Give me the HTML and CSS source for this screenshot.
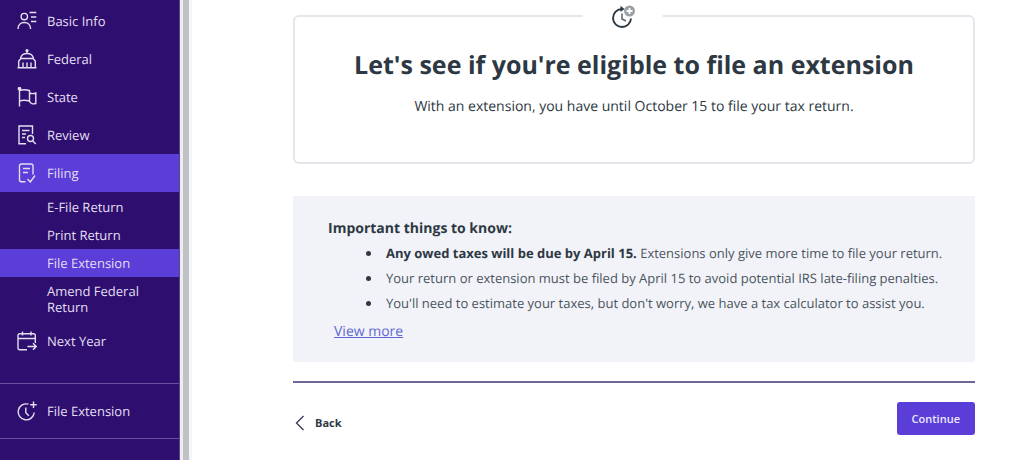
FILE: index.html
```html
<!DOCTYPE html>
<html lang="en">
<head>
    <meta charset="UTF-8">
    <meta name="viewport" content="width=device-width, initial-scale=1.0">
    <title>File Extension</title>
    <link rel="stylesheet" href="styles.css">
</head>
<body>

    <div class="page">

        <!-- Sidebar -->
        <nav class="sidebar">
            <a href="#" class="nav-item">
                <svg class="icon" viewBox="0 0 20 20"><circle cx="7.3" cy="5.6" r="3.2"/><path d="M1 18c0-4 2.500-6.500 6.300-6.500s6.300 2.500 6.300 6.500M12.500 1.500h6.800M14 6h5.300M14 10.500h5.300"/></svg>
                Basic Info
            </a>
            <a href="#" class="nav-item">
                <svg class="icon" viewBox="0 0 20 20"><path d="M10 1v3M3.500 9.500C4 6.500 6.500 4.500 10 4.500s6 2 6.500 5M.5 18.800h19M1.700 18.500v-6.500l2.300-2.500h12l2.300 2.500v6.500M6 18v-4.500M10 18v-4.500M14 18v-4.500"/><circle cx="10" cy="1.700" r="0.900"/></svg>
                Federal
            </a>
            <a href="#" class="nav-item">
                <svg class="icon" viewBox="0 0 20 20"><path d="M2.500 1v18.500M2.500 3.500c3-1 6-1 10 0v10.500c-4-1-7-1-10 0M12.500 6c2 .8 4 .8 6.300 0v10.500c-2.800.8-5.500.5-6.300-2.500"/><circle cx="2.500" cy="1.700" r="1.200" fill="#e4dff0"/></svg>
                State
            </a>
            <a href="#" class="nav-item">
                <svg class="icon" viewBox="0 0 20 20"><path d="M9 18.800H2V1h13.500v8M5 5.500h7.500M5 9h4M5 12.500h3M15.800 16l3 3"/><circle cx="13.500" cy="13.500" r="3"/></svg>
                Review
            </a>
            <a href="#" class="nav-item active">
                <svg class="icon" viewBox="0 0 20 20"><path d="M8.500 18.800H4.500c-1.200 0-2-.8-2-2V3c0-1.200.8-2 2-2H14c1.200 0 2 .8 2 2v8.500M6 5.500h7M6 9.500h5M10.500 16l2.800 3 4.700-6.500"/></svg>
                Filing
            </a>

            <div class="sub-menu">
                <a href="#" class="sub-item">E-File Return</a>
                <a href="#" class="sub-item">Print Return</a>
                <a href="#" class="sub-item active">File Extension</a>
                <a href="#" class="sub-item">Amend Federal Return</a>
            </div>

            <a href="#" class="nav-item">
                <svg class="icon" viewBox="0 0 20 20"><path d="M10 18.800H2.800c-1.200 0-1.800-.7-1.800-1.800V4.500c0-1.200.6-1.800 1.800-1.800h13.700c1.200 0 1.800.6 1.800 1.800V12M1 7.500h17.300M5.500.5v4M14 .5v4M10.500 15.500h8.500M16 12.200l3.200 3.300L16 18.800"/></svg>
                Next Year
            </a>

            <div class="shortcut">
                <a href="#" class="nav-item">
                    <svg class="icon" viewBox="0 0 20 20"><path d="M11.500 3.200a8 8 0 1 0 5.700 8.300M8.800 6.500v5.200l3 3M16.500.5v6.500M13.200 3.700h6.500"/></svg>
                    File Extension
                </a>
            </div>
        </nav>

        <div class="divider-bar"></div>

        <!-- Main Content -->
        <main class="content">
            <section class="card">
                <div class="card-icon">
                    <svg viewBox="0 0 24 24"><path d="M10.500 4A9 9 0 1 0 20 13.500" stroke="#2d3843" stroke-width="1.900" fill="none"/><path d="M9.500.8l4 3.200-4 3z" fill="#2d3843"/><path d="M11 8.500v5.500l4 2" stroke="#5a636c" stroke-width="1.500" fill="none"/><circle cx="18.500" cy="6" r="5.500" fill="#9a9fa4"/><path d="M18.500 3v6M15.500 6h6" stroke="#ffffff" stroke-width="1.800"/></svg>
                </div>
                <h1>Let's see if you're eligible to file an extension</h1>
                <p>With an extension, you have until October 15 to file your tax return.</p>
            </section>

            <section class="info-box">
                <h2>Important things to know:</h2>
                <ul>
                    <li><strong>Any owed taxes will be due by April 15.</strong> Extensions only give more time to file your return.</li>
                    <li>Your return or extension must be filed by April 15 to avoid potential IRS late-filing penalties.</li>
                    <li>You'll need to estimate your taxes, but don't worry, we have a tax calculator to assist you.</li>
                </ul>
                <a href="#" class="view-more">View more</a>
            </section>

            <div class="actions">
                <button type="button" class="back-btn">
                    <svg viewBox="0 0 10 16"><path d="M8.500 1L1.500 8l7 7"/></svg>
                    Back
                </button>
                <button type="button" class="continue-btn">Continue</button>
            </div>
        </main>

    </div>

</body>
</html>
```
FILE: styles.css
```css
* {
    box-sizing: border-box;
}
body {
    margin: 0;
    font-family: "Open Sans", "Noto Sans", sans-serif;
    text-rendering: geometricPrecision;
    color: #2d3843;
    background-color: #fff;
}
.page {
    display: flex;
    min-height: 100vh;
}

/* Sidebar */
.sidebar {
    flex: 0 0 180px;
    padding-top: 2px;
    background-color: #2e0f70;
    border-right: 1px solid #58448a;
}
.nav-item {
    display: flex;
    align-items: center;
    gap: 10px;
    height: 38px;
    padding-left: 17px;
    color: #e4dff0;
    font-size: 13px;
    text-decoration: none;
}
.icon {
    width: 20px;
    height: 20px;
    fill: none;
    stroke: #e4dff0;
    stroke-width: 1.4;
}
.active {
    background-color: #5b3dd8;
}
.sub-menu {
    padding: 1px 0;
}
.sub-item {
    display: block;
    padding: 6px 32px 6px 47px;
    color: #e4dff0;
    font-size: 13px;
    line-height: 16px;
    text-decoration: none;
}
.shortcut {
    margin-top: 23px;
    padding: 8px 0;
    border-top: 1px solid #6a4f9c;
    border-bottom: 1px solid #6a4f9c;
}
.divider-bar {
    flex: 0 0 12px;
    background-color: #bfc1c4;
    border-left: 3px solid #eeeef2;
    border-right: 3px solid #f4f5f8;
}

/* Main content */
.content {
    flex: 1;
    padding: 15px 49px 24px 101px;
}
.card {
    position: relative;
    padding: 28px 32px 43px;
    border: 2px solid #e5e5ec;
    border-radius: 6px;
    text-align: center;
}
.card-icon {
    position: absolute;
    top: -12px;
    left: calc(50% - 51px);
    display: flex;
    justify-content: center;
    width: 80px;
    background-color: #fff;
}
.card-icon svg {
    width: 24px;
    height: 24px;
}
h1 {
    margin: 0;
    font-size: 25px;
    line-height: 40px;
}
.card p {
    margin: 10px 0 0;
    font-size: 14px;
    line-height: 24px;
}
.info-box {
    margin-top: 32px;
    padding: 21px 35px 17px;
    background-color: #f2f3f8;
    border-radius: 2px;
}
h2 {
    margin: 0 0 1px;
    font-size: 14px;
    line-height: 23px;
}
.info-box ul {
    margin: 0 -20px 3px 0;
    padding-left: 54px;
}
.info-box li {
    padding-left: 4px;
    color: #4a535d;
    font-size: 13px;
    line-height: 25px;
}
.info-box li::marker,
.info-box strong {
    color: #2d3843;
}
.view-more {
    display: block;
    width: fit-content;
    margin-left: 6px;
    color: #5f68d0;
    font-size: 14px;
    line-height: 26px;
}

/* Buttons */
.actions {
    display: flex;
    justify-content: space-between;
    align-items: center;
    margin-top: 19px;
    padding-top: 19px;
    border-top: 2px solid #6f6596;
}
.back-btn,
.continue-btn {
    font-family: inherit;
    font-size: 11px;
    font-weight: 600;
    border: none;
    cursor: pointer;
}
.back-btn {
    display: flex;
    align-items: center;
    gap: 10px;
    padding: 8px 2px 0;
    color: #2d3843;
    font-weight: bold;
    background: none;
}
.back-btn svg {
    width: 10px;
    height: 16px;
    fill: none;
    stroke: #3c3a5c;
    stroke-width: 1.4;
}
.continue-btn {
    padding: 8px 15px;
    color: #ece8fb;
    line-height: 17px;
    background-color: #5b3dd8;
    border-radius: 3px;
}
```
